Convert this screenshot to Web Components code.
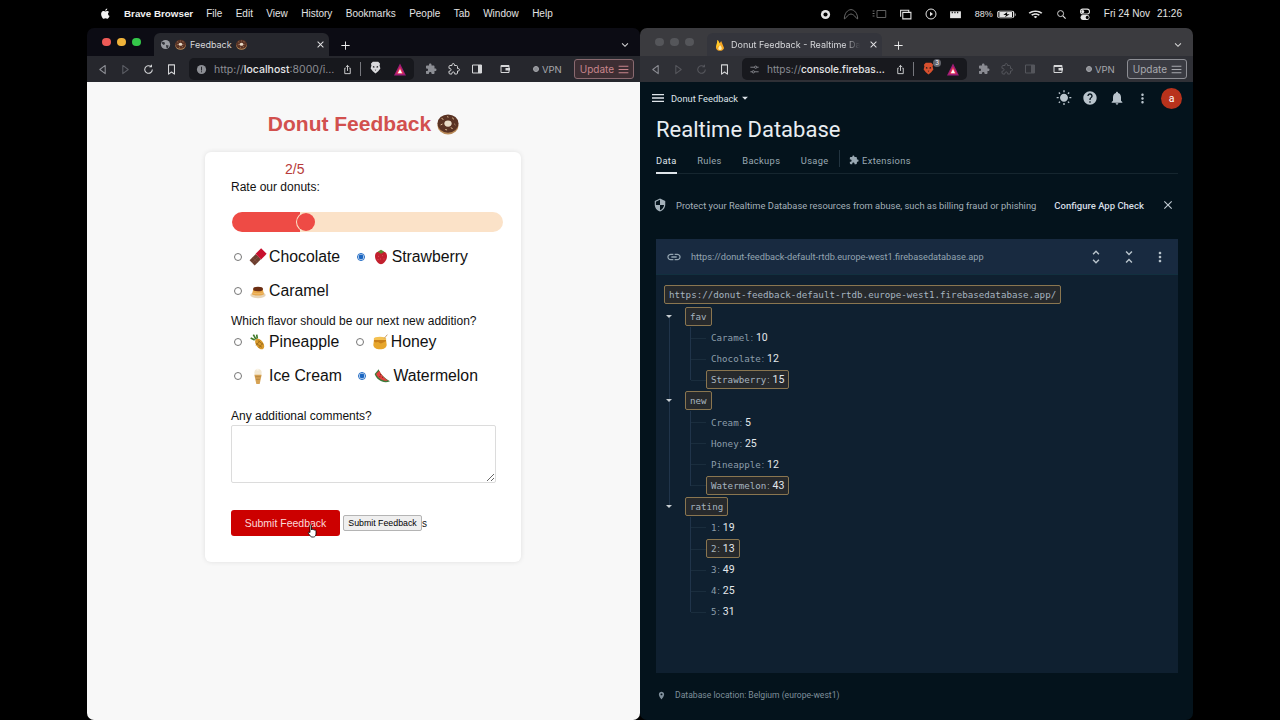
<!DOCTYPE html>
<html lang="en">
<head>
<meta charset="utf-8">
<title>Donut Feedback</title>
<style>
	html, body { margin: 0; height: 100%; background: #000; overflow: hidden; }
	body { font-family: "Liberation Sans", sans-serif; }
</style>
</head>
<body>
<mac-desktop>
	<browser-window slot="left" active tab-title="Feedback" url-scheme="http://" url-host="localhost" url-rest=":8000/i..." url-icon="info" shield="plain">
		<tab-emoji slot="tab-icon" name="globe"></tab-emoji>
		<tab-emoji slot="tab-icon" name="donut"></tab-emoji>
		<tab-emoji slot="tab-suffix" name="donut"></tab-emoji>
		<donut-feedback></donut-feedback>
	</browser-window>
	<browser-window slot="right" tab-title="Donut Feedback - Realtime Da" url-scheme="https://" url-host="console.firebas..." url-rest="" url-icon="tune" shield="badge">
		<tab-emoji slot="tab-icon" name="flame" size="14"></tab-emoji>
		<firebase-console></firebase-console>
	</browser-window>
</mac-desktop>

<script>
const ICONS = {
	menu: `<path d="M3 18h18v-2H3v2zm0-5h18v-2H3v2zm0-7v2h18V6H3z"/>`,
	help: `<path d="M12 2C6.48 2 2 6.48 2 12s4.48 10 10 10 10-4.48 10-10S17.52 2 12 2zm1 17h-2v-2h2v2zm2.07-7.75l-.9.92C13.45 12.9 13 13.5 13 15h-2v-.5c0-1.1.45-2.1 1.17-2.83l1.24-1.26c.37-.36.59-.86.59-1.41 0-1.1-.9-2-2-2s-2 .9-2 2H8c0-2.21 1.79-4 4-4s4 1.79 4 4c0 .88-.36 1.68-.93 2.25z"/>`,
	bell: `<path d="M12 22c1.1 0 2-.9 2-2h-4c0 1.1.89 2 2 2zm6-6v-5c0-3.07-1.64-5.64-4.5-6.32V4c0-.83-.67-1.5-1.5-1.5s-1.5.67-1.5 1.5v.68C7.63 5.36 6 7.92 6 11v5l-2 2v1h16v-1l-2-2z"/>`,
	dots: `<path d="M12 8c1.1 0 2-.9 2-2s-.9-2-2-2-2 .9-2 2 .9 2 2 2zm0 2c-1.1 0-2 .9-2 2s.9 2 2 2 2-.9 2-2-.9-2-2-2zm0 6c-1.1 0-2 .9-2 2s.9 2 2 2 2-.9 2-2-.9-2-2-2z"/>`,
	close: `<path d="M19 6.41L17.59 5 12 10.59 6.41 5 5 6.41 10.59 12 5 17.59 6.41 19 12 13.41 17.59 19 19 17.59 13.41 12z"/>`,
	link: `<path d="M3.9 12c0-1.71 1.39-3.1 3.1-3.1h4V7H7c-2.76 0-5 2.24-5 5s2.24 5 5 5h4v-1.9H7c-1.71 0-3.1-1.39-3.1-3.1zM8 13h8v-2H8v2zm9-6h-4v1.9h4c1.71 0 3.1 1.39 3.1 3.1s-1.39 3.1-3.1 3.1h-4V17h4c2.76 0 5-2.24 5-5s-2.24-5-5-5z"/>`,
	unfoldMore: `<path d="M12 5.83L15.17 9l1.41-1.41L12 3 7.41 7.59 8.83 9 12 5.83zm0 12.34L8.83 15l-1.41 1.41L12 21l4.59-4.59L15.17 15 12 18.17z"/>`,
	unfoldLess: `<path d="M7.41 18.59L8.83 20 12 16.83 15.17 20l1.41-1.41L12 14l-4.59 4.59zm9.18-13.18L15.17 4 12 7.17 8.83 4 7.41 5.41 12 10l4.59-4.59z"/>`,
	place: `<path d="M12 2C8.13 2 5 5.13 5 9c0 5.25 7 13 7 13s7-7.75 7-13c0-3.87-3.13-7-7-7zm0 9.5c-1.38 0-2.5-1.12-2.5-2.5s1.12-2.5 2.5-2.5 2.5 1.12 2.5 2.5-1.12 2.5-2.5 2.5z"/>`,
	extension: `<path d="M20.5 11H19V7c0-1.1-.9-2-2-2h-4V3.5C13 2.12 11.88 1 10.5 1S8 2.12 8 3.5V5H4c-1.1 0-1.99.9-1.99 2v3.8H3.5c1.49 0 2.7 1.21 2.7 2.7s-1.21 2.7-2.7 2.7H2V20c0 1.1.9 2 2 2h3.8v-1.5c0-1.49 1.21-2.7 2.7-2.7 1.49 0 2.7 1.21 2.7 2.7V22H17c1.1 0 2-.9 2-2v-4h1.5c1.38 0 2.5-1.12 2.5-2.5S21.88 11 20.5 11z"/>`,
	sun: `<path d="M6.76 4.84l-1.8-1.79-1.41 1.41 1.79 1.79 1.42-1.41zM4 10.5H1v2h3v-2zm9-9.95h-2V3.5h2V.55zm7.45 3.91l-1.41-1.41-1.79 1.79 1.41 1.41 1.79-1.79zm-3.21 13.7l1.79 1.8 1.41-1.41-1.8-1.79-1.4 1.4zM20 10.5v2h3v-2h-3zm-8-5c-3.31 0-6 2.69-6 6s2.69 6 6 6 6-2.69 6-6-2.69-6-6-6zm-1 16.95h2V19.5h-2v2.95zm-7.45-3.91l1.41 1.41 1.79-1.8-1.41-1.41-1.79 1.8z"/>`,
	shield: `<path d="M12 1L3 5v6c0 5.55 3.84 10.74 9 12 5.16-1.26 9-6.45 9-12V5l-9-4zm0 10.99h7c-.53 4.12-3.28 7.79-7 8.94V12H5V6.3l7-3.11v8.8z"/>`,
	drop: `<path d="M7 10l5 5 5-5z"/>`,
	apple: `<path d="M16.6 12.6c0-2.3 1.9-3.4 2-3.5-1.1-1.6-2.8-1.8-3.4-1.8-1.4-.1-2.8.9-3.5.9s-1.9-.9-3.1-.8c-1.6 0-3.1.9-3.9 2.3-1.7 2.9-.4 7.1 1.2 9.5.8 1.2 1.8 2.5 3 2.4 1.2 0 1.7-.8 3.1-.8s1.9.8 3.2.8 2.1-1.2 2.9-2.3c.9-1.3 1.3-2.6 1.3-2.7-.1 0-2.8-1-2.8-4.4zM14.3 5.6c.6-.8 1.1-1.9 1-3-.9 0-2.1.6-2.8 1.4-.6.7-1.1 1.8-1 2.9 1.1.1 2.1-.5 2.8-1.3z"/>`,
	back: `<path d="M17 4.5 7 12l10 7.5z" fill="none" stroke="currentColor" stroke-width="2" stroke-linejoin="round"/>`,
	forward: `<path d="M7 4.5 17 12 7 19.5z" fill="none" stroke="currentColor" stroke-width="2" stroke-linejoin="round"/>`,
	reload: `<path d="M19 12a7 7 0 1 1-2.2-5.1" fill="none" stroke="currentColor" stroke-width="2"/><path d="M18.5 2.5v5.5H13z"/>`,
	bookmark: `<path d="M6.5 3.5h11v17L12 16.5l-5.5 4z" fill="none" stroke="currentColor" stroke-width="2" stroke-linejoin="round"/>`,
	share: `<path d="M8 9H6v12h12V9h-2M12 15V3M8.5 6.5 12 3l3.5 3.5" fill="none" stroke="currentColor" stroke-width="2"/>`,
	info: `<circle cx="12" cy="12" r="10"/><path d="M11 6h2v8h-2zM11 16h2v2h-2z" fill="#1a1b20"/>`,
	tune: `<path d="M3 7h9M17 7h4M3 17h4M12 17h9" fill="none" stroke="currentColor" stroke-width="2"/><circle cx="14.500" cy="7" r="2.500" fill="none" stroke="currentColor" stroke-width="2"/><circle cx="9.500" cy="17" r="2.500" fill="none" stroke="currentColor" stroke-width="2"/>`,
	puzzle: `<path d="M20.500 11H19V7c0-1.100-.9-2-2-2h-4V3.500C13 2.120 11.880 1 10.500 1S8 2.120 8 3.500V5H4c-1.100 0-2 .9-2 2v3.800h1.500c1.500 0 2.700 1.200 2.700 2.700s-1.200 2.700-2.700 2.700H2V20c0 1.100.9 2 2 2h3.800v-1.500c0-1.500 1.200-2.700 2.700-2.700s2.700 1.200 2.700 2.700V22H17c1.100 0 2-.9 2-2v-4h1.500c1.400 0 2.500-1.100 2.500-2.500S21.900 11 20.500 11z" fill="none" stroke="currentColor" stroke-width="2"/>`,
	sidebar: `<path d="M3 4h18v16H3z" fill="none" stroke="currentColor" stroke-width="2"/><path d="M14 4h7v16h-7z"/>`,
	wallet: `<path d="M20 7V5H4v14h16V7H4" fill="none" stroke="currentColor" stroke-width="2"/><path d="M13 10h9v5h-9z"/>`,
	lines: `<path d="M3 5h18v2H3zM3 11h18v2H3zM3 17h18v2H3z"/>`,
	plus: `<path d="M11 3h2v18h-2zM3 11h18v2H3z"/>`,
	chevron: `<path d="M5 8l7 7 7-7" fill="none" stroke="currentColor" stroke-width="2.500"/>`,
	lion: `<path fill-rule="evenodd" d="M7 1.500h10l3.500 3.500-1 3 1.500 6-4 5-5 4-5-4-4-5 1.500-6-1-3zM7.500 9l3 1.500-1 2-2.500-1zM16.500 9l-3 1.500 1 2 2.500-1zM10.500 16h3L12 18z"/>`,
	record: `<circle cx="12" cy="12" r="10"/><circle cx="12" cy="12" r="4.500" fill="#000"/>`,
	arc: `<path d="M2 20C2 10 7 3 12 3s10 7 10 17c-3 0-3-7-10-9-7 2-7 9-10 9z" fill="none" stroke="currentColor" stroke-width="1.500"/>`,
	dashed: `<path d="M8 5h14v14H8z" fill="none" stroke="currentColor" stroke-width="1.500"/><path d="M1 5h3v2H1zM1 10h3v2H1zM1 15h3v2H1z"/>`,
	windows: `<path d="M7 8h15v12H7z" fill="none" stroke="currentColor" stroke-width="2"/><path d="M3 16V4h15v4" fill="none" stroke="currentColor" stroke-width="2"/>`,
	play: `<circle cx="12" cy="12" r="10" fill="none" stroke="currentColor" stroke-width="2"/><path d="M10 7.500v9l6-4.500z"/>`,
	clapper: `<path d="M2 5h20v15H2z"/><path d="M5 6h2v3H5zM10 6h2v3h-2zM15 6h2v3h-2z" fill="#000"/>`,
	battery: `<rect x="1" y="3" width="20" height="18" rx="3" fill="none" stroke="currentColor" stroke-width="1.500"/><path d="M3 5h16v14H3z"/><path d="M13 5 8 13h3.500L10 19l6-8h-3.500z" fill="#000"/><path d="M22.500 9h1v6h-1z"/>`,
	wifi: `<path d="M1 9.500C7 3.500 17 3.500 23 9.500l-2 2C16 6.500 8 6.500 3 11.500zM5 13.500c4-4 10-4 14 0l-2 2c-3-3-7-3-10 0zM9 17.500c2-1.800 4-1.800 6 0l-3 3z"/>`,
	search: `<circle cx="10" cy="10" r="6.500" fill="none" stroke="currentColor" stroke-width="2"/><path d="M15 15l6 6" stroke="currentColor" stroke-width="2.500"/>`,
	control: `<rect x="3" y="2" width="18" height="9" rx="4.500" fill="none" stroke="currentColor" stroke-width="2"/><circle cx="7.500" cy="6.500" r="3"/><rect x="3" y="13" width="18" height="9" rx="4.500"/><circle cx="16.500" cy="17.500" r="3" fill="#000"/>`,
};

const PICTURES = {
	donut: `<ellipse cx="12" cy="13.500" rx="11.500" ry="10" fill="#b98a58"/><ellipse cx="12" cy="11.500" rx="11.500" ry="10" fill="#5a3324"/><ellipse cx="12" cy="11.500" rx="4" ry="3.400" fill="#e9dcc8"/><path d="M5 6l2 1M17 5l1 2M19 12l1 1M4 13l2-1M9 18l2 .5M15 16l2 1M11 4l1.500 .5" stroke="#e8c9a0" stroke-width="1"/>`,
	globe: `<circle cx="12" cy="12" r="10" fill="#9a9ca2"/><path d="M5 6l5 1 1 4-3 2-4-3zM13 13l6 1-2 6-3-1z" fill="#34363c"/>`,
	flame: `<path d="M5 17 8 3l3.500 6L14 5l5 12c-1 3.500-4 5-7 5s-6-1.500-7-5z" fill="#f5a623"/><path d="M5 17 8 3l4 8z" fill="#ffca28"/><path d="M9 19c0-3 2-5 3-7 2 2 3 4 3 7-1 2-5 2-6 0z" fill="#fff0b0"/>`,
	chocolate: `<g transform="rotate(-45 12 12) translate(12 12) scale(.78) translate(-12 -12)"><rect x="-4" y="5" width="17" height="14" fill="#6d3f30"/><path d="M4 5v14M-4 12h17" stroke="#8a5a48" stroke-width="1"/><rect x="13" y="4.500" width="15" height="15" fill="#c8102e"/></g>`,
	strawberry: `<path d="M12 5c5-2 9 0 9 6 0 7-6 12-9 12S3 18 3 11c0-6 4-8 9-6z" fill="#c2202e"/><path d="M7 4l5-3 5 3-5 3z" fill="#5a8a30"/><path d="M8 11h1M14 10h1M11 15h1M7 16h1M16 15h1" stroke="#ef8a8a"/>`,
	flan: `<ellipse cx="12" cy="18" rx="11.500" ry="5" fill="#e6d4b8"/><path d="M5 9h14l2 8c-3 2.500-15 2.500-18 0z" fill="#e8a84a"/><ellipse cx="12" cy="9" rx="7.500" ry="3.500" fill="#6b2d12"/><path d="M4 15c3 1.500 13 1.500 16 0" stroke="#f3c27a" fill="none"/>`,
	pineapple: `<path d="M5 1l4 7M10 1l1 6M1 6l6 3" stroke="#3f7a28" stroke-width="2.500"/><ellipse cx="14.500" cy="15" rx="5.500" ry="9" transform="rotate(-35 14.500 15)" fill="#d99a2b"/><path d="M9 14l9 6M12 10l8 6M9 17l6-7M13 21l6-7" stroke="#8b5f18"/>`,
	honey: `<path d="M3 8h18l1 8c0 4-4 7-10 7S2 20 2 16z" fill="#e7a62c"/><ellipse cx="12" cy="7.500" rx="9.500" ry="3.500" fill="#f4c152"/><path d="M3 11c3 4 5-1 8 2s6-1 10-2V9H3z" fill="#c9801a"/><path d="M18 7l5-6" stroke="#c8a070" stroke-width="1.500"/>`,
	icecream: `<circle cx="12" cy="7" r="5.500" fill="#f3e8d2"/><path d="M10 1l3 0 0 3-3 0z" fill="#fbf5e8"/><path d="M6.500 10h11l-3 14h-5z" fill="#d6a254"/><path d="M8 13h8M9 17h6" stroke="#a87a36"/>`,
	watermelon: `<path d="M1 9c3 9 13 15 23 11C16 15 9 9 7 2z" fill="#3d7a3a"/><path d="M3 9c3 7 11 11 18 10C15 15 10 9 8 4z" fill="#e2413f"/><path d="M9 10h1.500M12 14h1.500M8 13h1.500" stroke="#4a1a18"/>`,
};

class UiIcon extends HTMLElement {
	connectedCallback() {
		const size = this.getAttribute("size") ?? 12;
		const width = this.getAttribute("width") ?? size;
		const source = this.hasAttribute("picture") ? PICTURES : ICONS;
		this.attachShadow({ mode: "open" }).innerHTML = `
			<style>
				:host { display: inline-flex; flex: none; }
				svg { display: block; fill: currentColor; overflow: visible; }
			</style>
			<svg width="${width}" height="${size}" viewBox="0 0 24 24" preserveAspectRatio="none">${source[this.getAttribute("name")]}</svg>
		`;
	}
}
customElements.define("ui-icon", UiIcon);

class TabEmoji extends HTMLElement {
	connectedCallback() {
		this.attachShadow({ mode: "open" }).innerHTML = `
			<style>:host { display: inline-flex; }</style>
			<ui-icon picture name="${this.getAttribute("name")}" size="${this.getAttribute("size") ?? 11}"></ui-icon>
		`;
	}
}
customElements.define("tab-emoji", TabEmoji);

class MacMenubar extends HTMLElement {
	connectedCallback() {
		const menus = ["File", "Edit", "View", "History", "Bookmarks", "People", "Tab", "Window", "Help"];
		this.attachShadow({ mode: "open" }).innerHTML = `
			<style>
				:host { display: flex; height: 28px; align-items: center; color: #e4e4e4; font: 10px/14px "Liberation Sans", sans-serif; }
				.apple { margin: 0 0 2px 99px; color: #f2f2f2; }
				b { margin: 0 13px 0 12px; font-size: 9.800px; font-weight: 700; color: #f0f0f0; }
				.menus { display: flex; gap: 13.400px; }
				.status { display: flex; align-items: center; margin-left: auto; margin-right: 98px; gap: 12.500px; }
				.dim { opacity: .5; }
				.time { display: flex; gap: 7px; }
				.battery { display: flex; align-items: center; gap: 4px; font-size: 9px; }
			</style>
			<ui-icon class="apple" name="apple" size="13"></ui-icon>
			<b>Brave Browser</b>
			<div class="menus">${menus.map(m => `<span>${m}</span>`).join("")}</div>
			<div class="status">
				<ui-icon name="record" size="11"></ui-icon>
				<ui-icon class="dim" name="arc" size="13" width="16"></ui-icon>
				<ui-icon class="dim" name="dashed" size="12" width="15"></ui-icon>
				<ui-icon name="windows" size="13"></ui-icon>
				<ui-icon name="play" size="12"></ui-icon>
				<ui-icon name="clapper" size="11" width="13"></ui-icon>
				<div class="battery"><span>88%</span><ui-icon name="battery" size="9" width="19"></ui-icon></div>
				<ui-icon name="wifi" size="12" width="15"></ui-icon>
				<ui-icon name="search" size="11"></ui-icon>
				<ui-icon name="control" size="13" width="12"></ui-icon>
				<div class="time"><span>Fri 24 Nov</span><span>21:26</span></div>
			</div>
		`;
	}
}
customElements.define("mac-menubar", MacMenubar);

class MacDesktop extends HTMLElement {
	connectedCallback() {
		this.attachShadow({ mode: "open" }).innerHTML = `
			<style>
				:host { display: block; width: 1280px; height: 720px; background: #000; overflow: hidden; }
				.windows { display: flex; height: 692px; padding-left: 87px; }
			</style>
			<mac-menubar></mac-menubar>
			<div class="windows">
				<slot name="left"></slot>
				<slot name="right"></slot>
			</div>
		`;
	}
}
customElements.define("mac-desktop", MacDesktop);

class BrowserWindow extends HTMLElement {
	connectedCallback() {
		const active = this.hasAttribute("active");
		const a = name => this.getAttribute(name) ?? "";
		const badge = a("shield") === "badge";
		this.attachShadow({ mode: "open" }).innerHTML = `
			<style>
				:host {
					display: flex; flex-direction: column; width: 553px; height: 692px; box-sizing: border-box;
					border-radius: 7px; overflow: hidden;
					--strip: ${active ? "#0c0c14" : "#3b3b3f"};
					--bar: ${active ? "#26272d" : "#2f3036"};
					--tab: ${active ? "#26272d" : "#34353c"};
					--capsule: ${active ? "#17181d" : "#18191e"};
					--muted: ${active ? "#8c8e94" : "#8a8b92"};
					--faded: ${active ? "#5a5c63" : "#55565c"};
					font-family: "Inter", sans-serif;
				}
				.strip { display: flex; align-items: flex-end; height: 28px; background: var(--strip); flex: none; }
				.lights { display: flex; gap: 6.500px; align-self: center; margin: 0 0 0 15px; width: 52px; }
				.lights i { width: 8.500px; height: 8.500px; border-radius: 50%; background: #55565a; }
				.on i:nth-child(1) { background: #ed5a56; }
				.on i:nth-child(2) { background: #eeb23a; }
				.on i:nth-child(3) { background: #34c749; }
				.tab {
					display: flex; align-items: center; gap: 4px; width: 175px; height: 23px; box-sizing: border-box;
					padding: 0 3px 0 6px; background: var(--tab); border-radius: 6px 6px 0 0;
					color: #d6d7da; font-size: 9px; white-space: nowrap;
				}
				.title { overflow: hidden; max-width: 129px; -webkit-mask-image: ${active ? "none" : "linear-gradient(90deg, #000 88%, transparent)"}; }
				.tab .x { margin-left: auto; color: #e4e4e6; }
				.plus { margin: 0 0 5px 11px; color: #eee; }
				.more { margin: 0 10px 6px auto; color: #d8d8d8; }
				.bar { display: flex; align-items: center; height: 26px; background: var(--bar); flex: none; color: var(--muted); }
				.nav { display: flex; width: 102px; padding-left: 8.500px; gap: 10.300px; box-sizing: border-box; }
				.capsule {
					display: flex; align-items: center; width: 225px; height: 22px; box-sizing: border-box; padding-left: 7px;
					background: var(--capsule); border-radius: 5px; font-size: ${active ? 10.5 : 10.1}px; color: var(--muted);
				}
				.capsule strong { font-weight: 500; color: #e6e6e8; }
				.url { margin-left: 7px; width: 124px; white-space: nowrap; overflow: hidden; }
				.sep { width: 1px; height: 14px; background: #77787e; margin: 0 8px 0 7px; }
				.tools { display: flex; align-items: center; margin-left: 11px; gap: 11px; }
				.vpn { display: flex; align-items: center; gap: 3px; margin-left: 22px; color: #a6a7ac; font-size: 9.500px; }
				.vpn i { width: 6px; height: 6px; border-radius: 50%; border: 1.500px solid #a6a7ac; box-sizing: border-box; background: #8c8e94; }
				.update {
					display: flex; align-items: center; justify-content: space-between; width: 60px; height: 20px; margin-left: 12px;
					box-sizing: border-box; padding: 0 3px 0 5px; border-radius: 3px; font-size: 10px;
					border: 1px solid ${active ? "#8a6a70" : "#8d8e94"}; background: ${active ? "#3d2e33" : "#3a3b42"};
					color: ${active ? "#c8858c" : "#a8a9ae"};
				}
				.lion { position: relative; color: ${badge ? "#d9502e" : "#d9d9dc"}; }
				.count {
					position: absolute; top: -3px; right: -6px; width: 8px; height: 8px; border-radius: 50%;
					background: #62646c; color: #fff; font: 6px/8px "Inter", sans-serif; text-align: center;
				}
				.brand { margin-left: 11px; }
				.page { flex: 1; min-height: 0; }
				.dim { color: var(--faded); }
				.bright { color: #d5d6d8; }
			</style>
			<div class="strip">
				<div class="lights ${active ? "on" : ""}"><i></i><i></i><i></i></div>
				<div class="tab">
					<slot name="tab-icon"></slot>
					<span class="title">${a("tab-title")}</span>
					<slot name="tab-suffix"></slot>
					<ui-icon class="x" name="close" size="11"></ui-icon>
				</div>
				<ui-icon class="plus" name="plus" size="11"></ui-icon>
				<ui-icon class="more" name="chevron" size="10"></ui-icon>
			</div>
			<div class="bar">
				<div class="nav">
					<ui-icon name="back" size="13"></ui-icon>
					<ui-icon class="dim" name="forward" size="13"></ui-icon>
					<ui-icon class="${active ? "bright" : "dim"}" name="reload" size="13"></ui-icon>
					<ui-icon class="bright" name="bookmark" size="13"></ui-icon>
				</div>
				<div class="capsule">
					<ui-icon name="${a("url-icon")}" size="11"></ui-icon>
					<span class="url">${a("url-scheme")}<strong>${a("url-host")}</strong>${a("url-rest")}</span>
					<ui-icon class="bright" name="share" size="11" style="margin-left:4px"></ui-icon>
					<span class="sep"></span>
					<span class="lion">
						<ui-icon name="lion" size="13"></ui-icon>
						${badge ? `<span class="count">3</span>` : ""}
					</span>
					<svg class="brand" width="14" height="13" viewBox="0 0 24 24"><path d="M12 1 23 23H1z" fill="#a01c78"/><path d="M12 7l7 13H5z" fill="#e9384f"/><path d="M12 11l4 8H8z" fill="#fff"/></svg>
				</div>
				<div class="tools">
					<ui-icon name="extension" size="12"></ui-icon>
					<ui-icon class="${active ? "bright" : "dim"}" name="puzzle" size="12"></ui-icon>
					<ui-icon class="${active ? "bright" : "dim"}" name="sidebar" size="12"></ui-icon>
					<ui-icon class="bright" name="wallet" size="12" style="margin-left:5px"></ui-icon>
				</div>
				<div class="vpn"><i></i>VPN</div>
				<div class="update">Update<ui-icon name="lines" size="13"></ui-icon></div>
			</div>
			<div class="page"><slot></slot></div>
		`;
	}
}
customElements.define("browser-window", BrowserWindow);

class RadioChoice extends HTMLElement {
	connectedCallback() {
		const checked = this.hasAttribute("checked") ? "checked" : "";
		this.attachShadow({ mode: "open" }).innerHTML = `
			<style>
				:host { display: inline-flex; align-items: center; height: 34px; font-size: 15.800px; color: #111; }
				input { width: 8px; height: 8px; margin: 0 8px 0 3px; accent-color: #1a66c2; }
				span { margin-left: 3px; white-space: nowrap; }
			</style>
			<input type="radio" ${checked}>
			<ui-icon picture name="${this.getAttribute("emoji")}" size="16"></ui-icon>
			<span><slot></slot></span>
		`;
	}
}
customElements.define("radio-choice", RadioChoice);

class DonutFeedback extends HTMLElement {
	connectedCallback() {
		this.attachShadow({ mode: "open" }).innerHTML = `
			<style>
				:host { display: flex; flex-direction: column; align-items: center; height: 100%; background: #f8f8f8; font-family: "Liberation Sans", sans-serif; color: #111; }
				h1 { display: flex; align-items: center; gap: 6px; margin: 28px 0 14px; height: 28px; font-size: 21px; font-weight: 700; color: #d2504e; }
				.card { position: relative; width: 316px; margin-right: 1px; box-sizing: border-box; padding: 10px 25px 26px 26px; background: #fff; border-radius: 6px; box-shadow: 0 0 5px rgba(0, 0, 0, .1); font-size: 12px; }
				.line { line-height: 14px; white-space: nowrap; }
				.score { padding-left: 54px; font-size: 14px; color: #b83a3a; }
				.rate { margin-top: 4px; }
				.slider { position: relative; width: 271px; height: 20px; margin: 18px 0 8px 1px; border-radius: 10px; background: linear-gradient(90deg, #ee4b45 68px, #fbe2c8 68px); }
				.thumb { position: absolute; left: 65px; top: 1px; width: 18px; height: 18px; box-sizing: border-box; border-radius: 50%; background: #ee4b45; box-shadow: 0 0 0 1px #fbe2c8; }
				.row { display: flex; gap: 13.500px; height: 34px; }
				.next { margin-top: 6px; margin-bottom: -3px; }
				.comments { margin-top: 16px; }
				textarea { display: block; width: 265px; height: 58px; margin-top: 2px; box-sizing: border-box; border: 1px solid #dcdcdc; border-radius: 2px; outline: none; background: #fff; }
				.actions { display: flex; align-items: center; margin-top: 27px; height: 26px; }
				.submit { width: 109px; height: 26px; padding: 0; border: 0; border-radius: 3px; background: #cc0000; color: #fbdada; font: 10.500px "Liberation Sans", sans-serif; }
				.plain { width: 79px; height: 16px; margin-left: 3px; padding: 0; border: 1px solid #b4b4b4; border-radius: 2px; background: #efefef; color: #000; font: 8.800px "Liberation Sans", sans-serif; }
				.tail { font-size: 10px; }
				.hand { position: absolute; left: 102px; top: 372px; }
			</style>
			<h1>Donut Feedback <ui-icon picture name="donut" size="22"></ui-icon></h1>
			<div class="card">
				<div class="line score">2/5</div>
				<div class="line rate">Rate our donuts:</div>
				<div class="slider"><div class="thumb"></div></div>
				<div class="row">
					<radio-choice emoji="chocolate">Chocolate</radio-choice>
					<radio-choice emoji="strawberry" checked>Strawberry</radio-choice>
				</div>
				<div class="row"><radio-choice emoji="flan">Caramel</radio-choice></div>
				<div class="line next">Which flavor should be our next new addition?</div>
				<div class="row">
					<radio-choice emoji="pineapple">Pineapple</radio-choice>
					<radio-choice emoji="honey">Honey</radio-choice>
				</div>
				<div class="row">
					<radio-choice emoji="icecream">Ice Cream</radio-choice>
					<radio-choice emoji="watermelon" checked>Watermelon</radio-choice>
				</div>
				<div class="line comments">Any additional comments?</div>
				<textarea></textarea>
				<div class="actions">
					<button class="submit">Submit Feedback</button>
					<button class="plain">Submit Feedback</button><span class="tail">s</span>
				</div>
				<svg class="hand" width="11" height="14" viewBox="0 0 11 14"><path d="M3 1.500c0-1 1.500-1 1.500 0V6l.5-.5c.6-.4 1.200-.2 1.300.3.5-.4 1.200-.2 1.300.4.6-.3 1.400 0 1.400.8V10c0 1.500-1 3-2.500 3H5C3.500 13 3 11.500 1.500 9.500.8 8.500 1.500 7.500 3 8.500z" fill="#fff" stroke="#000" stroke-width=".8"/></svg>
			</div>
		`;
	}
}
customElements.define("donut-feedback", DonutFeedback);

class DbNode extends HTMLElement {
	connectedCallback() {
		const value = this.getAttribute("value");
		const hl = this.hasAttribute("hl");
		const branch = this.hasAttribute("branch");
		const leaf = this.hasAttribute("leaf");
		this.attachShadow({ mode: "open" }).innerHTML = `
			<style>
				:host { display: block; position: relative; }
				.row { display: flex; align-items: center; height: 21.100px; }
				.box { display: inline-flex; align-items: center; height: 19px; padding: 0 4px; box-sizing: border-box; border: 1px solid transparent; border-radius: 2px; white-space: nowrap; font: 9.200px "DejaVu Sans Mono", monospace; color: #8d9eab; }
				.hl { background: #26292c; border-color: #8a7650; color: #a7b5c0; }
				.colon { margin-left: 1px; font-family: "Roboto", sans-serif; }
				.value { margin-left: 3px; font: 10.500px "Roboto", sans-serif; color: #e4e8ec; }
				.arrow { width: 0; height: 0; margin: 0 13px 0 2px; border: 3px solid transparent; border-top: 3px solid #c8ced2; border-bottom: 0; }
				.kids { margin-left: 26px; padding-left: 16px; background: linear-gradient(#20344a, #20344a) 0 0 / 1px calc(100% - 10px) no-repeat; }
				.stub { position: absolute; left: -15px; top: 10.500px; width: 15px; height: 1px; background: #1a2d3d; }
			</style>
			${leaf ? `<span class="stub"></span>` : ""}
			<div class="row">
				${branch ? `<span class="arrow"></span>` : ""}
				<span class="box ${branch || hl ? "hl" : ""}">${this.getAttribute("key")}${value ? `<span class="colon">:</span><span class="value">${value}</span>` : ""}</span>
			</div>
			${branch ? `<div class="kids"><slot></slot></div>` : ""}
		`;
	}
}
customElements.define("db-node", DbNode);

class FirebaseConsole extends HTMLElement {
	connectedCallback() {
		const tabs = ["Data", "Rules", "Backups", "Usage"];
		const group = (key, rows) => `<db-node branch key="${key}">${rows.map(([k, v, hl]) => `<db-node leaf key="${k}" value="${v}" ${hl ? "hl" : ""}></db-node>`).join("")}</db-node>`;
		this.attachShadow({ mode: "open" }).innerHTML = `
			<style>
				:host { display: block; height: 100%; box-sizing: border-box; padding: 1px 15px 0 16px; background: #04131c; color: #dfe5ea; font-family: "Roboto", sans-serif; overflow: hidden; }
				.top { display: flex; align-items: center; height: 30px; margin-left: -6px; font-size: 9.300px; }
				.top .project { margin-left: 5px; }
				.right { display: flex; align-items: center; margin-left: auto; margin-right: -4px; gap: 10.500px; color: #b9c4cc; }
				.avatar { width: 21px; height: 21px; margin-left: .5px; border-radius: 50%; background: #b8321c; color: #fff; font-size: 10.500px; line-height: 21px; text-align: center; }
				h1 { margin: 4px 0 0; height: 26px; font-size: 22px; line-height: 26px; font-weight: 400; color: #e8edf1; }
				nav { display: flex; align-items: stretch; height: 28px; margin: 3px 0 0; border-bottom: 1px solid #16262f; font-size: 9.300px; letter-spacing: .35px; color: #9aa9b3; box-sizing: border-box; }
				nav span { display: flex; align-items: center; margin-right: 20.500px; box-sizing: border-box; padding-top: 1px; }
				nav .on { color: #dfe5ea; border-bottom: 2px solid #dfe5ea; margin-bottom: -1px; padding-top: 2px; }
				nav i { width: 1px; height: 17px; margin: 4px 9px 0 -10px; background: #223440; }
				nav .ext { gap: 3px; }
				.banner { display: flex; align-items: center; height: 30px; margin-top: 16px; font-size: 9.350px; white-space: nowrap; color: #a4b1ba; }
				.banner .shield { margin-left: -3px; }
				.banner .msg { margin-left: 9px; }
				.banner b { margin-left: 18px; font-weight: 500; font-size: 9.500px; color: #d5dee5; }
				.banner .x { margin-left: auto; margin-right: 3px; color: #c0cad1; }
				.panel { height: 434px; margin-top: 19px; background: #0f2030; }
				.head { display: flex; align-items: center; height: 36px; padding: 0 10px; box-sizing: border-box; background: #182a40; border-bottom: 1px solid #12303f; font-size: 9.200px; color: #93a4b0; }
				.head .addr { margin-left: 9px; }
				.head .acts { display: flex; align-items: center; gap: 14.500px; margin-left: auto; color: #b9c4cc; }
				.tree { padding: 8px 0 0 8px; }
				.root { display: inline-flex; align-items: center; height: 19px; padding: 0 4px; box-sizing: border-box; border: 1px solid #8a7650; border-radius: 2px; background: #26292c; font: 9.200px "DejaVu Sans Mono", monospace; color: #a7b5c0; white-space: nowrap; margin-bottom: 2px; }
				.groups { background: linear-gradient(#20344a, #20344a) 5px 12px / 1px 188px no-repeat; }
				.foot { display: flex; align-items: center; gap: 9px; margin-top: 17px; font-size: 8.600px; color: #7f8f9b; }
				.foot ui-icon { margin-left: 1px; }
			</style>
			<div class="top">
				<ui-icon name="menu" size="16"></ui-icon>
				<span class="project">Donut Feedback</span>
				<ui-icon name="drop" size="14"></ui-icon>
				<div class="right">
					<ui-icon name="sun" size="16"></ui-icon>
					<ui-icon name="help" size="16"></ui-icon>
					<ui-icon name="bell" size="16"></ui-icon>
					<ui-icon name="dots" size="15"></ui-icon>
					<div class="avatar">a</div>
				</div>
			</div>
			<h1>Realtime Database</h1>
			<nav>
				${tabs.map((t, i) => `<span class="${i === 0 ? "on" : ""}">${t}</span>`).join("")}
				<i></i>
				<span class="ext"><ui-icon name="extension" size="10"></ui-icon>Extensions</span>
			</nav>
			<div class="banner">
				<ui-icon class="shield" name="shield" size="14"></ui-icon>
				<span class="msg">Protect your Realtime Database resources from abuse, such as billing fraud or phishing</span>
				<b>Configure App Check</b>
				<ui-icon class="x" name="close" size="14"></ui-icon>
			</div>
			<div class="panel">
				<div class="head">
					<ui-icon name="link" size="16"></ui-icon>
					<span class="addr">https://donut-feedback-default-rtdb.europe-west1.firebasedatabase.app</span>
					<div class="acts">
						<ui-icon name="unfoldMore" size="18"></ui-icon>
						<ui-icon name="unfoldLess" size="18"></ui-icon>
						<ui-icon name="dots" size="16"></ui-icon>
					</div>
				</div>
				<div class="tree">
					<div class="root">https://donut-feedback-default-rtdb.europe-west1.firebasedatabase.app/</div>
					<div class="groups">
						${group("fav", [["Caramel", 10], ["Chocolate", 12], ["Strawberry", 15, true]])}
						${group("new", [["Cream", 5], ["Honey", 25], ["Pineapple", 12], ["Watermelon", 43, true]])}
						${group("rating", [["1", 19], ["2", 13, true], ["3", 49], ["4", 25], ["5", 31]])}
					</div>
				</div>
			</div>
			<div class="foot"><ui-icon name="place" size="9"></ui-icon>Database location: Belgium (europe-west1)</div>
		`;
	}
}
customElements.define("firebase-console", FirebaseConsole);
</script>
</body>
</html>
